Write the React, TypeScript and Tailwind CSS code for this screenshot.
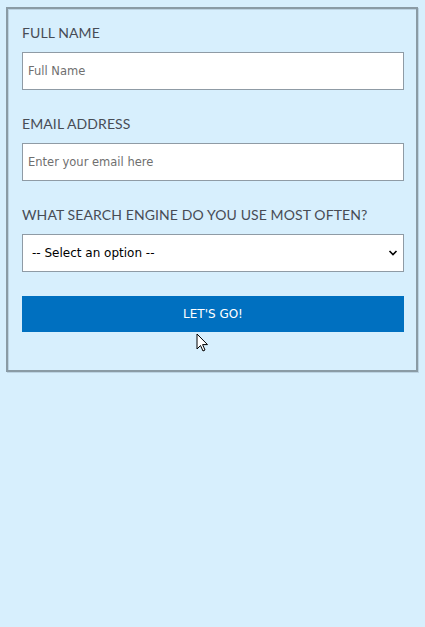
import React from "react";

const labelCls =
  "block text-[14px] leading-[17px] uppercase text-[#474c55] font-['Lato','Open_Sans',sans-serif] tracking-[0.1px]";
const fieldCls =
  "block w-full h-[38px] border border-[#8f9ba5] bg-white px-[5px] text-[11.5px] font-['DejaVu_Sans','Verdana',sans-serif] text-black placeholder:text-[#6f6f6f] outline-none";

export default function App() {
  return (
    <div className="min-h-[627px] w-[425px] bg-[#d7effd] pt-[7px] pl-[6px]">
      <form className="relative w-[412px] border-2 border-[#8a9ba5] pl-[14px] pr-[12px] pt-[15px] pb-[38px] shadow-[inset_1px_1px_0_#bcd3e2,1px_1px_0_#bcd3e2]">
        {/* Full name */}
        <label className={labelCls}>Full Name</label>
        <input className={`${fieldCls} mt-[11px]`} placeholder="Full Name" />

        {/* Email */}
        <label className={`${labelCls} mt-[25px]`}>Email Address</label>
        <input className={`${fieldCls} mt-[11px]`} placeholder="Enter your email here" />

        {/* Search engine */}
        <label className={`${labelCls} mt-[25px]`}>What search engine do you use most often?</label>
        <div className="relative mt-[11px]">
          <select className={`${fieldCls} appearance-none !text-[12px] pl-[9px]`} defaultValue="">
            <option value="">-- Select an option --</option>
            <option>Google</option>
            <option>Bing</option>
            <option>DuckDuckGo</option>
          </select>
          <svg
            className="pointer-events-none absolute right-[6px] top-[15px]"
            width="10"
            height="8"
            viewBox="0 0 10 8"
          >
            <path d="M1.5 2 L5 5.5 L8.5 2" fill="none" stroke="#000" strokeWidth="1.6" />
          </svg>
        </div>

        <button
          type="button"
          className="mt-[24px] block w-full h-[36px] bg-[#0070c0] text-white text-[12px] uppercase font-['DejaVu_Sans','Verdana',sans-serif]"
        >
          Let's Go!
        </button>

        {/* mouse cursor */}
        <svg
          className="pointer-events-none absolute left-[188px] top-[324px]"
          width="13"
          height="19"
          viewBox="0 0 13 19"
        >
          <path
            d="M1 1 L1 16 L4.5 12.5 L7 18 L9 17 L6.6 11.6 L11.5 11.6 Z"
            fill="#fff"
            stroke="#000"
            strokeWidth="1"
            strokeLinejoin="round"
          />
        </svg>
      </form>
    </div>
  );
}
